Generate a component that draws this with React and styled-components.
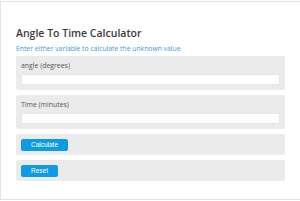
import React from 'react';
import styled, { createGlobalStyle } from 'styled-components';

const Global = createGlobalStyle`
  body {
    margin: 0;
    background: #fff;
    overflow: hidden;
    font-family: "Open Sans", "Liberation Sans", sans-serif;
  }
`

const Frame = styled.div`
  margin-top: 1px;
  width: 300px;
  height: 199px;
  border: 1px solid #e4e4e4;
  border-right: none;
  box-sizing: border-box;
  padding: 24px 0 0 15px;
`

const Title = styled.h1`
  margin: 0;
  font-size: 10.5px;
  font-weight: 600;
  color: #3b3b3b;
  line-height: 14px;
`

const Subtitle = styled.p`
  margin: 4px 0 3px;
  font-size: 6.8px;
  color: #3a9ad9;
  line-height: 9px;
`

const Stack = styled.div`
  width: 269px;
  display: flex;
  flex-direction: column;
  gap: 5px;
`

const Panel = styled.div`
  background: #ebebeb;
  border-radius: 2px;
  padding: ${p => (p.$tight ? '5px 5px 4px' : '5px')};
  display: flex;
  flex-direction: column;
  align-items: flex-start;
`

const Label = styled.label`
  font-size: 6.9px;
  color: #555;
  line-height: 10px;
  margin: 0 0 3px;
`

const Input = styled.input`
  width: 100%;
  height: 11px;
  box-sizing: border-box;
  border: 1px solid #e6e6e6;
  background: #fff;
  padding: 0;
`

const Button = styled.button`
  height: 12px;
  width: ${p => p.$w}px;
  border: none;
  border-radius: 2px;
  background: #0f9be3;
  color: #fff;
  font-family: "Liberation Sans", Arial, sans-serif;
  font-size: 6.5px;
  padding: 0;
  line-height: 12px;
`

export default function App() {
  return (
    <>
      <Global />
      <Frame>
        <Title>Angle To Time Calculator</Title>
        <Subtitle>Enter either variable to calculate the unknown value</Subtitle>
        <Stack>
          <Panel>
            <Label>angle (degrees)</Label>
            <Input />
          </Panel>
          <Panel>
            <Label>Time (minutes)</Label>
            <Input />
          </Panel>
          <Panel $tight>
            <Button $w={47}>Calculate</Button>
          </Panel>
          <Panel $tight>
            <Button $w={37}>Reset</Button>
          </Panel>
        </Stack>
      </Frame>
    </>
  )
}
